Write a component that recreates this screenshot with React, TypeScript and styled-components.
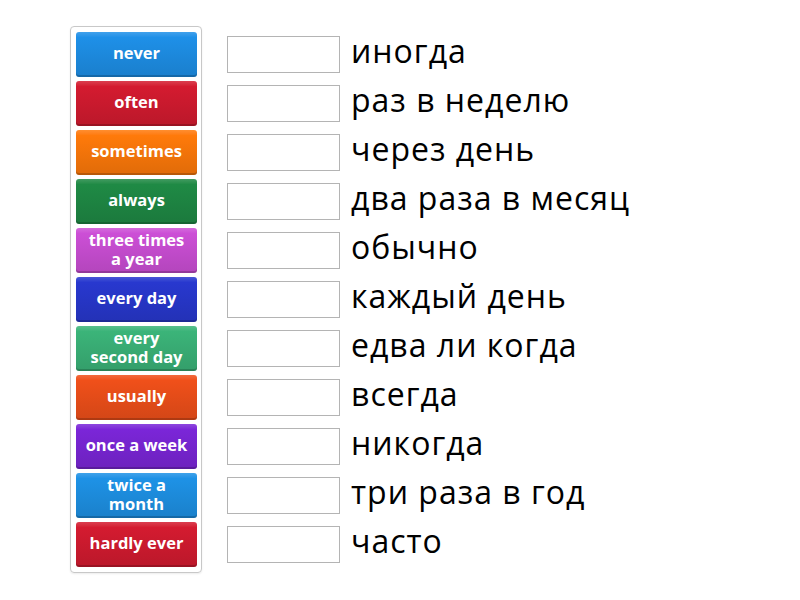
import styled, { createGlobalStyle } from 'styled-components';

type Tile = { label: string; color: string };

const tiles: Tile[] = [
  { label: 'never', color: '#1e90e8' },
  { label: 'often', color: '#d41b30' },
  { label: 'sometimes', color: '#ff7a0a' },
  { label: 'always', color: '#1f8a45' },
  { label: 'three times a year', color: '#cc4fd6' },
  { label: 'every day', color: '#2838cf' },
  { label: 'every second day', color: '#3bb479' },
  { label: 'usually', color: '#f0501a' },
  { label: 'once a week', color: '#7b26d8' },
  { label: 'twice a month', color: '#1e92e6' },
  { label: 'hardly ever', color: '#d41b30' },
];

const targets = [
  'иногда',
  'раз в неделю',
  'через день',
  'два раза в месяц',
  'обычно',
  'каждый день',
  'едва ли когда',
  'всегда',
  'никогда',
  'три раза в год',
  'часто',
];

const GlobalStyle = createGlobalStyle`
  body {
    margin: 0;
    background: #fff;
    font-family: 'Open Sans', 'Noto Sans', sans-serif;
  }
`;

const Page = styled.div`
  display: flex;
  align-items: flex-start;
  gap: 25px;
  padding: 26px 0 0 70px;
  width: 800px;
  height: 600px;
  box-sizing: border-box;
`;

const Bank = styled.div`
  display: flex;
  flex-direction: column;
  gap: 4px;
  padding: 5px 4px 5px 5px;
  border: 1px solid #c8c8c8;
  border-radius: 4px;
  box-shadow: 0 1px 2px rgba(0, 0, 0, 0.08);
`;

const Card = styled.div<{ $color: string }>`
  width: 121px;
  height: 45px;
  box-sizing: border-box;
  display: flex;
  align-items: center;
  justify-content: center;
  text-align: center;
  padding: 0 8px 4px;
  border-radius: 3px;
  background: linear-gradient(
    to bottom,
    color-mix(in srgb, ${p => p.$color} 85%, white) 0%,
    ${p => p.$color} 12%,
    color-mix(in srgb, ${p => p.$color} 88%, black) 100%
  );
  box-shadow: inset 0 -2px 0 rgba(0, 0, 0, 0.18);
  color: #fff;
  font-size: 16.5px;
  font-weight: 700;
  line-height: 19px;
`;

const Targets = styled.div`
  display: flex;
  flex-direction: column;
  gap: 12px;
  padding-top: 10px;
`;

const Row = styled.div`
  display: flex;
  align-items: center;
  gap: 11px;
  height: 37px;
`;

const Slot = styled.div`
  width: 113px;
  height: 37px;
  box-sizing: border-box;
  border: 1px solid #b4b4b4;
  background: #fff;
`;

const Word = styled.span`
  font-size: 32px;
  letter-spacing: 1px;
  color: #000;
  line-height: 37px;
  white-space: nowrap;
  position: relative;
  top: -4px;
`;

export default function App() {
  return (
    <Page>
      <GlobalStyle />
      <Bank>
        {tiles.map(t => (
          <Card key={t.label} $color={t.color}>
            {t.label}
          </Card>
        ))}
      </Bank>
      <Targets>
        {targets.map(w => (
          <Row key={w}>
            <Slot />
            <Word>{w}</Word>
          </Row>
        ))}
      </Targets>
    </Page>
  );
}
